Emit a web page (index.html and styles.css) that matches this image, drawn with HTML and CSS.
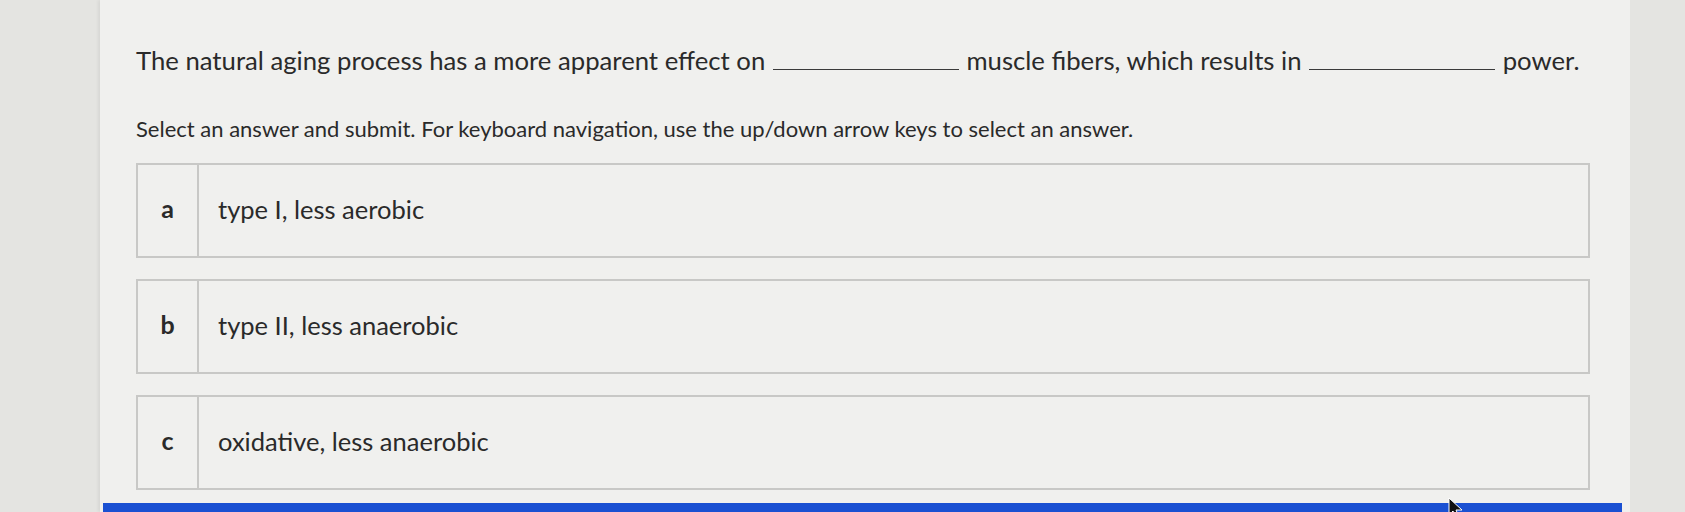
FILE: index.html
```html
<!DOCTYPE html>
<html lang="en">
<head>
    <meta charset="UTF-8">
    <title>Question</title>
    <link rel="stylesheet" href="styles.css">
</head>
<body>
    <div class="panel">
        <p class="question">
            The natural aging process has a more apparent effect on <span class="blank"></span> muscle fibers, which results in <span class="blank"></span> power.
        </p>

        <p class="hint">Select an answer and submit. For keyboard navigation, use the up/down arrow keys to select an answer.</p>

        <div class="options">
            <div class="option">
                <div class="letter">a</div>
                <div class="answer">type I, less aerobic</div>
            </div>
            <div class="option">
                <div class="letter">b</div>
                <div class="answer">type II, less anaerobic</div>
            </div>
            <div class="option">
                <div class="letter">c</div>
                <div class="answer">oxidative, less anaerobic</div>
            </div>
        </div>

        <div class="submit-bar">
            <svg class="cursor" width="18" height="22" viewBox="0 0 18 22">
                <path d="M1 1 L1 18 L5 14 L8 21 L11 20 L8 13 L14 13 Z" fill="#111" stroke="#fff" stroke-width="1"/>
            </svg>
        </div>
    </div>
</body>
</html>
```

FILE: styles.css
```css
body {
    margin: 0;
    background: #e4e4e1;
    font-family: "Lato", "Open Sans", sans-serif;
    color: #2a2a2a;
    overflow: hidden;
}
.panel {
    margin-left: 100px;
    width: 1530px;
    height: 512px;
    background: #f0f0ee;
    box-shadow: -2px 0 3px rgba(0,0,0,0.06);
    padding: 0 0 0 36px;
    box-sizing: border-box;
    display: flex;
    flex-direction: column;
}
.question {
    margin: 43px 0 0 0;
    font-size: 25.7px;
    line-height: 34px;
    white-space: nowrap;
}
.blank {
    display: inline-block;
    width: 186px;
    border-bottom: 1px solid #3a3a3a;
    margin: 0 1px;
}
.hint {
    margin: 38px 0 0 0;
    font-size: 22px;
    line-height: 28px;
    white-space: nowrap;
}
.options {
    margin-top: 20px;
    width: 1454px;
    display: flex;
    flex-direction: column;
    gap: 21px;
}
.option {
    display: flex;
    height: 95px;
    border: 2px solid #c8c8c6;
    box-sizing: border-box;
}
.letter {
    width: 59px;
    border-right: 2px solid #c8c8c6;
    display: flex;
    align-items: center;
    justify-content: center;
    font-weight: bold;
    font-size: 25px;
    padding-bottom: 5px;
}
.answer {
    padding: 0 0 4px 19px;
    display: flex;
    align-items: center;
    font-size: 25.5px;
}
.submit-bar {
    position: relative;
    margin: 13px 0 0 -33px;
    width: 1519px;
    flex: 1;
    background: #1a50d2;
}
.cursor {
    position: absolute;
    left: 1345px;
    top: -6px;
}
```
